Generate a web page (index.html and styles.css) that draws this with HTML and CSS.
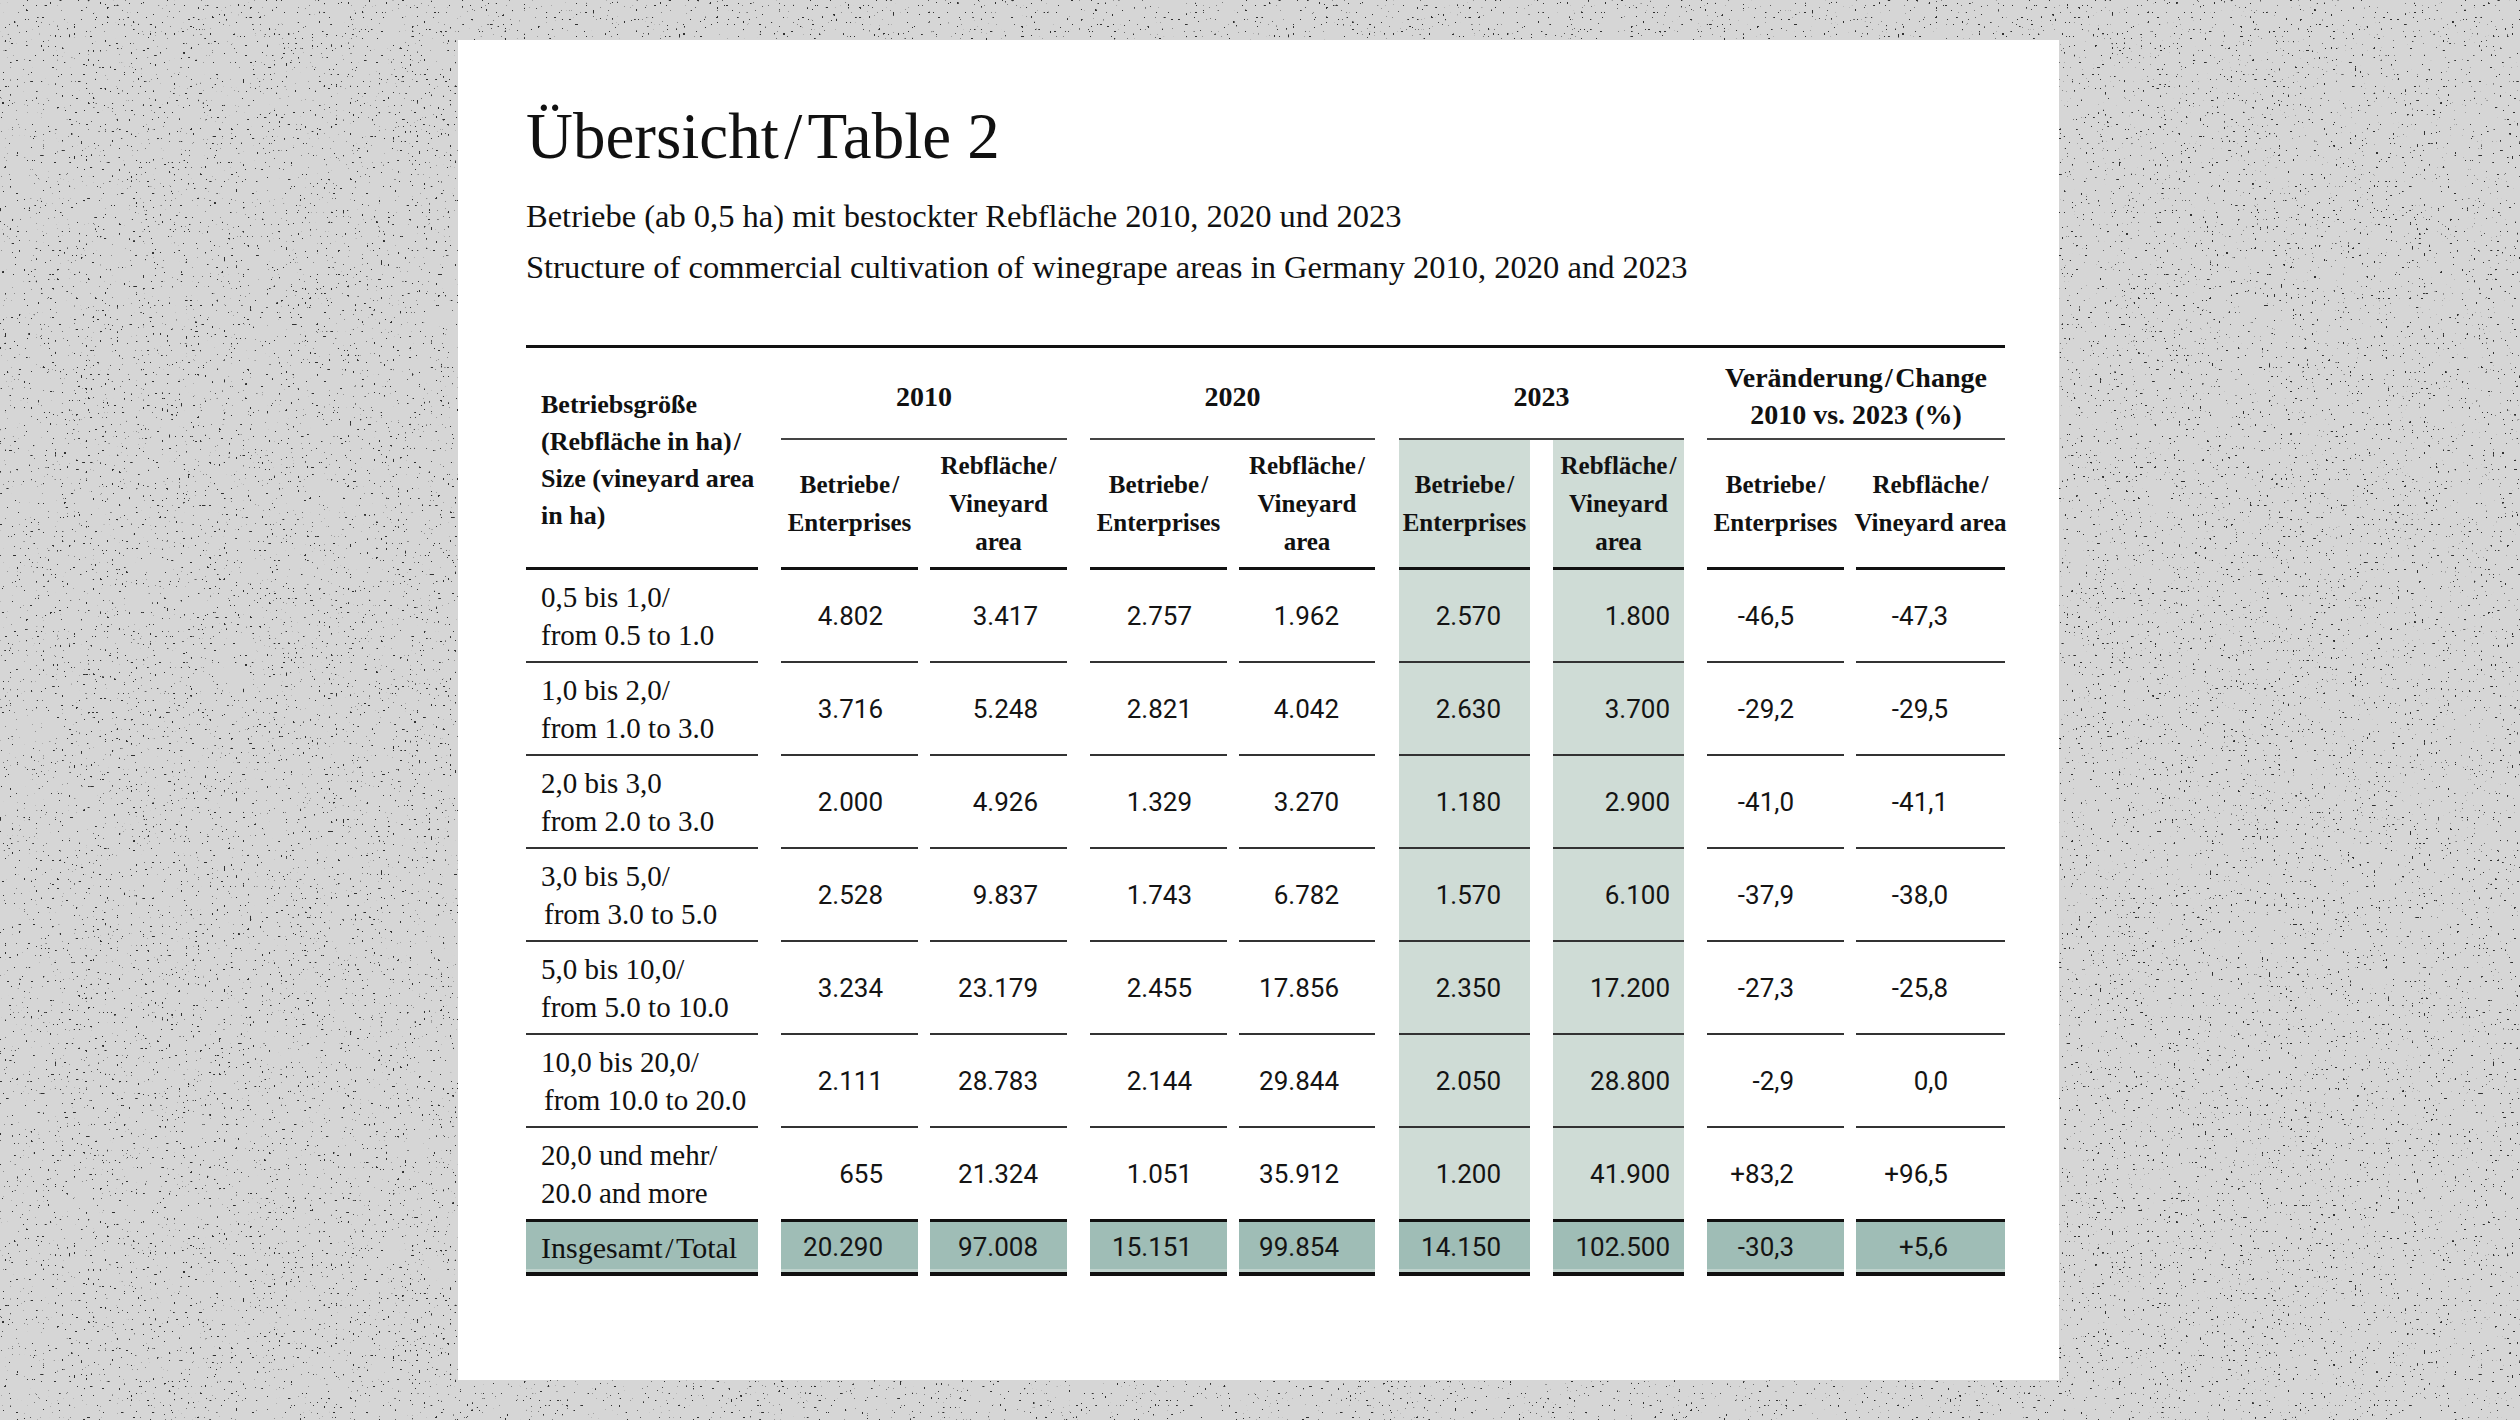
FILE: index.html
```html
<!DOCTYPE html>
<html lang="de">
<head>
<meta charset="utf-8">
<title>Übersicht / Table 2</title>
<link rel="stylesheet" href="styles.css">
</head>
<body>
<div class="card">
  <h1 class="title">Übersicht&#8202;/&#8202;Table 2</h1>
  <p class="sub sub-first">Betriebe (ab 0,5 ha) mit bestockter Rebfläche 2010, 2020 und 2023</p>
  <p class="sub">Structure of commercial cultivation of winegrape areas in Germany 2010, 2020 and 2023</p>

  <div class="tbl">
    <div class="grid thead">
      <div class="th-left"><span>Betriebsgröße<br>(Rebfläche in ha)&#8202;/<br>Size (vineyard area<br>in ha)</span></div>
      <div class="th-group g1"><span>2010</span></div>
      <div class="th-group g2"><span>2020</span></div>
      <div class="th-group g3"><span>2023</span></div>
      <div class="th-group g4"><span>Veränderung&#8202;/&#8202;Change<br>2010 vs. 2023 (%)</span></div>

      <div class="th-sub c1"><span>Betriebe&#8202;/<br>Enterprises</span></div>
      <div class="th-sub c2"><span>Rebfläche&#8202;/<br>Vineyard<br>area</span></div>
      <div class="th-sub c3"><span>Betriebe&#8202;/<br>Enterprises</span></div>
      <div class="th-sub c4"><span>Rebfläche&#8202;/<br>Vineyard<br>area</span></div>
      <div class="th-sub c5 shade"><span>Betriebe&#8202;/<br>Enterprises</span></div>
      <div class="th-sub c6 shade"><span>Rebfläche&#8202;/<br>Vineyard<br>area</span></div>
      <div class="th-sub c7"><span>Betriebe&#8202;/<br>Enterprises</span></div>
      <div class="th-sub c8"><span>Rebfläche&#8202;/<br>Vineyard area</span></div>
    </div>

    <div class="grid tr">
      <div class="lab c0"><span>0,5 bis 1,0/<br>from 0.5 to 1.0</span></div>
      <div class="num c1">4.802</div><div class="num c2">3.417</div>
      <div class="num c3">2.757</div><div class="num c4">1.962</div>
      <div class="num c5 shade">2.570</div><div class="num c6 shade">1.800</div>
      <div class="num c7">-46,5</div><div class="num c8">-47,3</div>
    </div>
    <div class="grid tr">
      <div class="lab c0"><span>1,0 bis 2,0/<br>from 1.0 to 3.0</span></div>
      <div class="num c1">3.716</div><div class="num c2">5.248</div>
      <div class="num c3">2.821</div><div class="num c4">4.042</div>
      <div class="num c5 shade">2.630</div><div class="num c6 shade">3.700</div>
      <div class="num c7">-29,2</div><div class="num c8">-29,5</div>
    </div>
    <div class="grid tr">
      <div class="lab c0"><span>2,0 bis 3,0<br>from 2.0 to 3.0</span></div>
      <div class="num c1">2.000</div><div class="num c2">4.926</div>
      <div class="num c3">1.329</div><div class="num c4">3.270</div>
      <div class="num c5 shade">1.180</div><div class="num c6 shade">2.900</div>
      <div class="num c7">-41,0</div><div class="num c8">-41,1</div>
    </div>
    <div class="grid tr">
      <div class="lab c0"><span>3,0 bis 5,0/<br><span class="ind">from 3.0 to 5.0</span></span></div>
      <div class="num c1">2.528</div><div class="num c2">9.837</div>
      <div class="num c3">1.743</div><div class="num c4">6.782</div>
      <div class="num c5 shade">1.570</div><div class="num c6 shade">6.100</div>
      <div class="num c7">-37,9</div><div class="num c8">-38,0</div>
    </div>
    <div class="grid tr">
      <div class="lab c0"><span>5,0 bis 10,0/<br>from 5.0 to 10.0</span></div>
      <div class="num c1">3.234</div><div class="num c2">23.179</div>
      <div class="num c3">2.455</div><div class="num c4">17.856</div>
      <div class="num c5 shade">2.350</div><div class="num c6 shade">17.200</div>
      <div class="num c7">-27,3</div><div class="num c8">-25,8</div>
    </div>
    <div class="grid tr">
      <div class="lab c0"><span>10,0 bis 20,0/<br><span class="ind">from 10.0 to 20.0</span></span></div>
      <div class="num c1">2.111</div><div class="num c2">28.783</div>
      <div class="num c3">2.144</div><div class="num c4">29.844</div>
      <div class="num c5 shade">2.050</div><div class="num c6 shade">28.800</div>
      <div class="num c7">-2,9</div><div class="num c8">0,0</div>
    </div>
    <div class="grid tr last">
      <div class="lab c0"><span>20,0 und mehr/<br>20.0 and more</span></div>
      <div class="num c1">655</div><div class="num c2">21.324</div>
      <div class="num c3">1.051</div><div class="num c4">35.912</div>
      <div class="num c5 shade">1.200</div><div class="num c6 shade">41.900</div>
      <div class="num c7">+83,2</div><div class="num c8">+96,5</div>
    </div>
    <div class="grid tr total">
      <div class="lab c0"><span>Insgesamt&#8202;/&#8202;Total</span></div>
      <div class="num c1">20.290</div><div class="num c2">97.008</div>
      <div class="num c3">15.151</div><div class="num c4">99.854</div>
      <div class="num c5">14.150</div><div class="num c6">102.500</div>
      <div class="num c7">-30,3</div><div class="num c8">+5,6</div>
    </div>
  </div>
</div>
</body>
</html>
```

FILE: styles.css
```css
* { box-sizing: border-box; }

html, body { margin: 0; padding: 0; }

body {
  width: 2520px;
  height: 1420px;
  overflow: hidden;
  font-family: "Liberation Serif", "Times New Roman", serif;
  color: #111;
  background-color: #d6d6d6;
  background-image: url("data:image/svg+xml;utf8,<svg xmlns='http://www.w3.org/2000/svg' width='2520' height='1420'><filter id='n' x='0' y='0' width='100%25' height='100%25'><feTurbulence type='fractalNoise' baseFrequency='0.42' numOctaves='1' seed='11'/><feColorMatrix type='matrix' values='0 0 0 0 0.03  0 0 0 0 0.03  0 0 0 0 0.03  40 0 0 0 -28.4'/></filter><rect width='2520' height='1420' filter='url(%23n)'/></svg>");
  background-repeat: no-repeat;
}

.card {
  width: 1601px;
  height: 1340px;
  margin: 40px 0 0 458px;
  padding: 64px 0 0 68px;
  background: #fff;
}

.title {
  margin: 0;
  font-weight: 400;
  font-size: 65px;
  line-height: 64px;
  white-space: nowrap;
}

.sub {
  margin: 0;
  font-size: 32.5px;
  line-height: 51px;
  white-space: nowrap;
}

.sub-first { margin-top: 23px; }

.tbl {
  margin-top: 52px;
  width: 1479px;
  border-top: 3px solid #111;
}

.grid {
  display: grid;
  grid-template-columns:
    [c0] 232px 23px
    [c1] 137px 12px
    [c2] 137px 23px
    [c3] 137px 12px
    [c4] 136px 24px
    [c5] 131px 23px
    [c6] 131px 23px
    [c7] 137px 12px
    [c8] 149px;
}

.c0 { grid-column: c0 / span 1; }
.c1 { grid-column: c1 / span 1; }
.c2 { grid-column: c2 / span 1; }
.c3 { grid-column: c3 / span 1; }
.c4 { grid-column: c4 / span 1; }
.c5 { grid-column: c5 / span 1; }
.c6 { grid-column: c6 / span 1; }
.c7 { grid-column: c7 / span 1; }
.c8 { grid-column: c8 / span 1; }

/* header */
.thead { grid-template-rows: 92px 130px; }

.th-left {
  grid-column: c0 / span 1;
  grid-row: 1 / 3;
  display: flex;
  align-items: center;
  padding: 4px 0 0 15px;
  font-weight: 700;
  font-size: 26px;
  line-height: 37px;
  white-space: nowrap;
  border-bottom: 3px solid #111;
}

.th-group {
  grid-row: 1;
  display: flex;
  align-items: center;
  justify-content: center;
  text-align: center;
  padding-top: 6px;
  font-weight: 700;
  font-size: 28px;
  line-height: 37px;
  white-space: nowrap;
  border-bottom: 2px solid #444;
}

.g1 { grid-column: c1 / span 3; }
.g2 { grid-column: c3 / span 3; }
.g3 { grid-column: c5 / span 3; }
.g4 { grid-column: c7 / span 3; }

.th-sub {
  grid-row: 2;
  display: flex;
  align-items: center;
  justify-content: center;
  text-align: center;
  font-weight: 700;
  font-size: 25px;
  line-height: 38px;
  white-space: nowrap;
  border-bottom: 3px solid #111;
}

.shade { background: #cfdcd6; }

/* body rows */
.tr { grid-template-rows: 93px; }

.tr > div { border-bottom: 2px solid #333; }

.tr.last { grid-template-rows: 91px; }
.tr.last > div { border-bottom: none; }

.lab {
  display: flex;
  align-items: center;
  padding-left: 15px;
  font-size: 29px;
  line-height: 38px;
  white-space: nowrap;
}

.ind { padding-left: 3px; }

.num {
  display: flex;
  align-items: center;
  justify-content: flex-end;
  font-family: Roboto, "Liberation Sans", sans-serif;
  font-size: 26px;
  color: #141414;
}

.tr > .c1 { padding-right: 35px; }
.tr > .c2 { padding-right: 29px; }
.tr > .c3 { padding-right: 35px; }
.tr > .c4 { padding-right: 36px; }
.tr > .c5 { padding-right: 29px; }
.tr > .c6 { padding-right: 14px; }
.tr > .c7 { padding-right: 50px; }
.tr > .c8 { padding-right: 57px; }

/* total row */
.tr.total { grid-template-rows: 57px; }

.tr.total > div {
  background: #9fbdb6;
  border-top: 3px solid #111;
  border-bottom: 4px solid #111;
  box-shadow: inset 0 -3px 0 #bfd2cc;
}

.tr.total > .lab { font-size: 30px; padding-top: 2px; }
```
